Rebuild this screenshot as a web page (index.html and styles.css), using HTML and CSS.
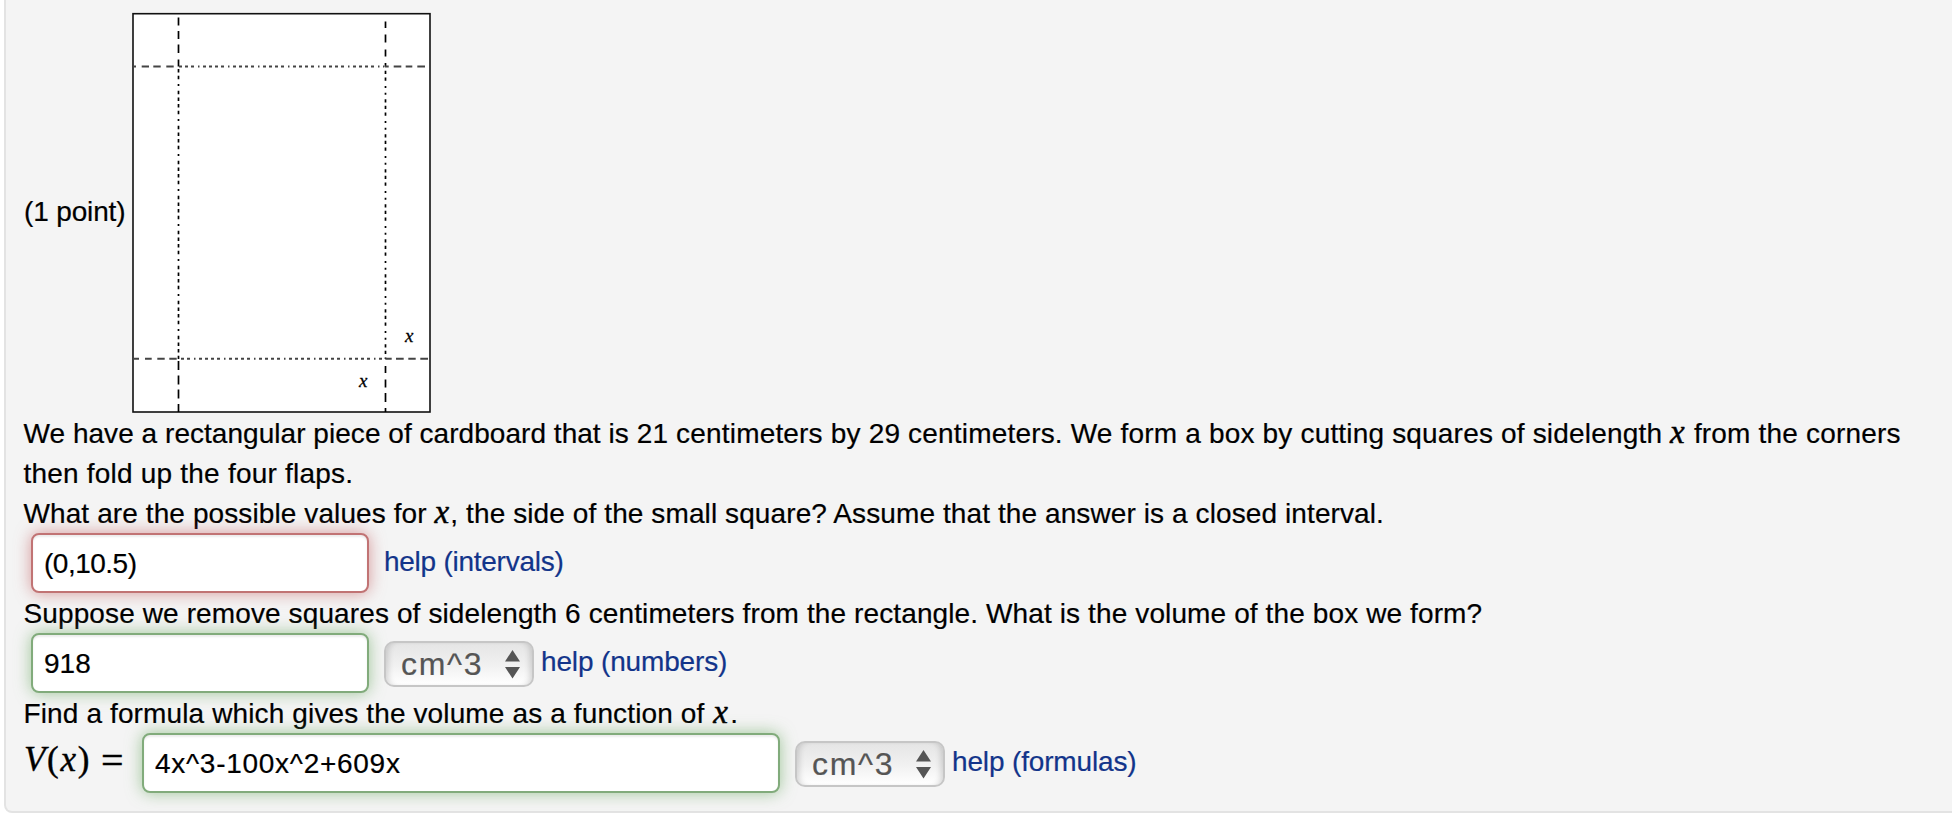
FILE: index.html
```
<!DOCTYPE html>
<html lang="en">
<head>
<meta charset="utf-8">
<title>Problem</title>
<link rel="stylesheet" href="styles.css">
</head>
<body>
<main class="problem">
  <div class="figure-row">
    <span class="points">(1 point)</span>
    <svg class="figure" width="300" height="402" viewBox="0 0 300 402">
      <rect class="sheet" x="1" y="1.700" width="297" height="398.300"/>
      <g class="fold">
        <path d="M46.500 5.500v8M46.500 19v8M46.500 32.500v8.500M46.500 47.500v7"/>
        <path d="M46.500 56V347" stroke-dasharray="2 4.700 3.500 3.200 3.500 3.200 3.500 3.200 3.500 4.700" stroke-dashoffset="19"/>
        <path d="M46.500 349v9M46.500 363.500v9M46.500 377.500v9M46.500 392v8"/>
        <path d="M253.500 9.500v6.500M253.500 22.500v8M253.500 37.500v7M253.500 51v4"/>
        <path d="M253.500 57V347" stroke-dasharray="2 4.700 2 4.500 3.300 3.300 3.300 3.300 3.300 5.300" stroke-dashoffset="18"/>
        <path d="M253.500 354v7M253.500 367.500v8M253.500 381v9M253.500 396v4"/>
      </g>
      <g class="fold soft">
        <path d="M1 54.600h3M9.700 54.600h7.300M21.300 54.600h7.400M34.300 54.600h7.400"/>
        <path d="M47 54.600H252" stroke-dasharray="3 3 3 3 3 3 3 4 1.500 3.500" stroke-dashoffset="6"/>
        <path d="M252.700 54.600h4M261.700 54.600h7.600M273.700 54.600h6.600M285.300 54.600h7.700"/>
        <path d="M1 346.800h6M13 346.800h6.700M25.300 346.800h7.400M37.300 346.800h7.400"/>
        <path d="M47 346.800H252" stroke-dasharray="3 3 3 3 3 3 3 4 1.500 3.500" stroke-dashoffset="10"/>
        <path d="M253.300 346.800h6.400M264 346.800h7.700M276.300 346.800h7.400M288.300 346.800h7.700"/>
      </g>
      <text x="273" y="329.500">x</text>
      <text x="227" y="374.500">x</text>
    </svg>
  </div>
  <p class="line l1"><span class="tight">We have a rectangular piece of cardboard that is </span>21 centimeters by 29 centimeters. We form a box by cutting squares of sidelength <i>x</i> from the corners</p>
  <p class="line l2">then fold up the four flaps.</p>
  <p class="line l3">What are the possible values for <i>x</i>, the side of the small square? Assume that the answer is a closed interval.</p>
  <div class="answer">
    <input class="field wrong" type="text" value="(0,10.5)">
    <a class="help">help (intervals)</a>
  </div>
  <p class="line l4">Suppose we remove squares of sidelength 6 centimeters from the rectangle. What is the volume of the box we form?</p>
  <div class="answer">
    <input class="field right" type="text" value="918">
    <div class="units"><span>cm^3</span><svg width="15" height="29" viewBox="0 0 15 29"><path d="M7.500 0L15 11.500H0zM0 17H15L7.500 28.500z"/></svg></div>
    <a class="help near">help (numbers)</a>
  </div>
  <p class="line l5">Find a formula which gives the volume as a function of <i>x</i>.</p>
  <div class="answer">
    <span class="formula"><i>V</i>(<i>x</i>)<span class="eq">=</span></span>
    <input class="field right wide" type="text" value="4x^3-100x^2+609x">
    <div class="units"><span>cm^3</span><svg width="15" height="29" viewBox="0 0 15 29"><path d="M7.500 0L15 11.500H0zM0 17H15L7.500 28.500z"/></svg></div>
    <a class="help near">help (formulas)</a>
  </div>
</main>
</body>
</html>
```
FILE: styles.css
```
* { box-sizing: border-box; }
body {
  margin: 0;
  height: 820px;
  overflow: hidden;
  background: #fff;
  color: #000;
  font: 28px/40px "Liberation Sans", Arial, sans-serif;
  -webkit-text-stroke: 0.2px;
}
.problem {
  height: 813px;
  margin: 0 -20px 0 4px;
  padding: 12px 0 0 18px;
  background: #f4f4f4;
  border: 2px solid #e3e3e3;
  border-top: 0;
  border-radius: 0 0 8px 8px;
}
.figure-row { display: flex; align-items: center; height: 402px; }
.points { width: 108px; padding-bottom: 2px; letter-spacing: -0.15px; white-space: nowrap; }
.figure { display: block; flex: none; }
.sheet { fill: #fff; stroke: #111; stroke-width: 1.6; }
.fold path { fill: none; stroke: #000; stroke-width: 1.7; }
.soft path { stroke: #444; stroke-width: 2; }
.figure text { font: italic 19px "Liberation Serif", serif; stroke: #000; stroke-width: 0.3px; }
.line { margin: 0; height: 40px; text-indent: -0.5px; white-space: nowrap; }
.line i { margin: 0 1px 0 0; font: italic 33px/30px "Liberation Serif", serif; -webkit-text-stroke: 0.5px; }
.l1 { letter-spacing: 0.18px; }
.tight { letter-spacing: 0.04px; }
.l2 { letter-spacing: 0.21px; }
.l3 { letter-spacing: 0.1px; }
.l4 { letter-spacing: 0.115px; }
.l5 { letter-spacing: 0.13px; }
.l5 i { margin: 0 2px 0 1px; }
.answer { display: flex; align-items: flex-start; height: 60px; }
.field {
  width: 338px;
  height: 60px;
  margin: -1px 0 0 7px;
  padding: 1px 11px 0;
  border: 2px solid;
  border-radius: 8px;
  background: #fff;
  color: #000;
  font: 28px "Liberation Sans", Arial, sans-serif;
  outline: 0;
}
.wrong { border-color: #c17374; letter-spacing: -0.5px; box-shadow: inset 0 2px 2px rgba(0,0,0,.075), 0 0 16px rgba(193,90,92,.6); }
.right { border-color: #81ab7b; box-shadow: inset 0 2px 2px rgba(0,0,0,.075), 0 0 16px rgba(100,165,90,.6); }
.wide { width: 638px; margin-left: 18px; letter-spacing: 0.72px; }
.help { margin: 8px 0 0 15px; color: #12348a; letter-spacing: -0.26px; white-space: nowrap; }
.near { margin-left: 7px; letter-spacing: -0.15px; }
.units {
  display: flex;
  align-items: center;
  justify-content: space-between;
  width: 150px;
  height: 46px;
  margin: 7px 0 0 15px;
  padding: 0 12px 0 15px;
  border: 2px solid #c6c6c6;
  border-radius: 10px;
  background: linear-gradient(#e5e5e5, #f0f0f0 50%, #fff);
  box-shadow: inset 6px 0 6px -4px rgba(0,0,0,.16), inset -6px 0 6px -4px rgba(0,0,0,.16);
  color: #555;
  font-size: 32px;
  letter-spacing: 1.7px;
}
.units span { padding-top: 0; }
.units svg { fill: #555; }
.formula { width: 100px; padding-top: 6px; font: 35px/40px "Liberation Serif", serif; letter-spacing: 1.7px; white-space: nowrap; -webkit-text-stroke: 0.4px; }
.eq { display: inline-block; margin-left: 10px; font-size: 40px; line-height: 30px; transform: translateY(3px); }
```
